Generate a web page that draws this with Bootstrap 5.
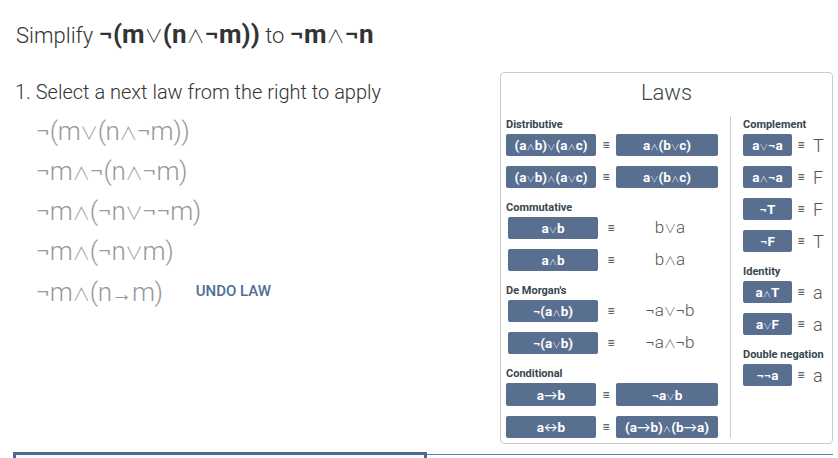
<!DOCTYPE html>
<html lang="en"><head><meta charset="utf-8">
<link href="https://cdn.jsdelivr.net/npm/bootstrap@5.3.0/dist/css/bootstrap.min.css" rel="stylesheet">
<style>
html,body{height:458px;overflow:hidden}
body{font-family:Roboto,"Liberation Sans",sans-serif;color:#37474f;background:#fff}
.page-wrap{padding:0 5px 0 16px;height:458px;position:relative}
.task-title{font-family:Roboto,"Liberation Sans",sans-serif;font-size:22px;font-weight:300;line-height:26px;padding-top:21px;margin:0;color:#333;height:47px}
.task-title b{font-weight:700;font-size:26px;line-height:26px}
.op{font-family:"Noto Sans CJK SC",sans-serif;font-weight:300;font-size:.7em;line-height:0}
.arw{font-family:Lato,sans-serif;font-weight:400;line-height:0}
.arl{font-family:"Liberation Sans",sans-serif;font-weight:400;line-height:0;font-size:.8em}
.body-row{margin-top:25px;gap:0}
.left-side{width:484px}
.step-text{font-size:20px;font-weight:300;line-height:24px;margin:8px 0 0 -1px;color:#333}
.steps{padding-left:20px;margin-top:7px}
.step-line{font-size:26px;font-weight:300;color:#999;line-height:40px;height:40px;white-space:nowrap;letter-spacing:-.4px}
.step-line .op{font-size:.68em}
.undo{font-size:15px;font-weight:500;letter-spacing:0;color:#4f6d97;margin-left:33px;text-transform:uppercase;vertical-align:5px}
.laws{width:333px;height:372px;border:1px solid #ccc;border-radius:4px;padding:0 5px}
.laws-title{font-size:22px;font-weight:300;text-align:center;line-height:26px;margin:7px 0 0;color:#37474f}
.laws-cols{margin-top:10px}
.col-main{width:212px}
.col-side{width:97px;margin-left:12px;border-left:1px solid #ccc;padding-left:12px}
.law-head{font-size:11px;font-weight:700;line-height:14px;height:14px;padding-top:2px;color:#37474f;white-space:nowrap}
.law-row{display:flex;align-items:center;height:22px;margin-top:10px;font-size:15px}
.law-head+.law-row{margin-top:4px}
.btn.law-btn{--bs-btn-padding-y:0;--bs-btn-padding-x:0;background:#596f90;color:#fff;border:0;border-radius:2px;font-size:13.5px;font-weight:700;height:22px;line-height:22px;white-space:nowrap;flex:none}
.law-btn .op{font-size:.62em}
.b-a{width:90px}
.b-b{width:102px}
.b-c{width:49px}
.eq{font-size:12px;text-align:center;width:20px;flex:none}
.ind{padding-left:2px}
.ind .eq{width:26px}
.res{width:92px;text-align:center;font-weight:300;font-size:17px;color:#555}
.side .eq{width:18px}
.side .res{width:auto;margin-left:3px;font-size:18px}
.grp{margin-top:11px}
.tall{height:23px}
.tall .btn.law-btn{height:23px}
.tab-line{position:absolute;left:427px;right:5px;top:454px;border-top:1px solid #5c7fa8}
.tab-active{position:absolute;left:13px;width:414px;top:452px;height:12px;border:3px solid #50688e;background:#f8f9fa}
</style></head>
<body>
<div class="page-wrap">
<h1 class="task-title">Simplify <b>¬(m<span class="op">∨</span>(n<span class="op">∧</span>¬m))</b> to <b>¬m<span class="op">∧</span>¬n</b></h1>
<div class="d-flex body-row">
<div class="left-side">
<p class="step-text">1. Select a next law from the right to apply</p>
<div class="steps">
<div class="step-line">¬(m<span class="op">∨</span>(n<span class="op">∧</span>¬m))</div>
<div class="step-line">¬m<span class="op">∧</span>¬(n<span class="op">∧</span>¬m)</div>
<div class="step-line">¬m<span class="op">∧</span>(¬n<span class="op">∨</span>¬¬m)</div>
<div class="step-line">¬m<span class="op">∧</span>(¬n<span class="op">∨</span>m)</div>
<div class="step-line">¬m<span class="op">∧</span>(n<span class="arl">→</span>m)<a class="undo text-decoration-none" href="#">Undo law</a></div>
</div>
</div>
<div class="laws">
<div class="laws-title">Laws</div>
<div class="d-flex laws-cols">
<div class="col-main">
<div class="law-head">Distributive</div>
<div class="law-row"><button class="btn law-btn b-a">(a<span class="op">∧</span>b)<span class="op">∨</span>(a<span class="op">∧</span>c)</button><span class="eq">≡</span><button class="btn law-btn b-b">a<span class="op">∧</span>(b<span class="op">∨</span>c)</button></div>
<div class="law-row"><button class="btn law-btn b-a">(a<span class="op">∨</span>b)<span class="op">∧</span>(a<span class="op">∨</span>c)</button><span class="eq">≡</span><button class="btn law-btn b-b">a<span class="op">∨</span>(b<span class="op">∧</span>c)</button></div>
<div class="law-head grp">Commutative</div>
<div class="law-row ind"><button class="btn law-btn b-a">a<span class="op">∨</span>b</button><span class="eq">≡</span><span class="res">b<span class="op">∨</span>a</span></div>
<div class="law-row ind"><button class="btn law-btn b-a">a<span class="op">∧</span>b</button><span class="eq">≡</span><span class="res">b<span class="op">∧</span>a</span></div>
<div class="law-head grp">De Morgan's</div>
<div class="law-row ind"><button class="btn law-btn b-a">¬(a<span class="op">∧</span>b)</button><span class="eq">≡</span><span class="res">¬a<span class="op">∨</span>¬b</span></div>
<div class="law-row ind"><button class="btn law-btn b-a">¬(a<span class="op">∨</span>b)</button><span class="eq">≡</span><span class="res">¬a<span class="op">∧</span>¬b</span></div>
<div class="law-head grp">Conditional</div>
<div class="law-row tall"><button class="btn law-btn b-a">a<span class="arw">→</span>b</button><span class="eq">≡</span><button class="btn law-btn b-b">¬a<span class="op">∨</span>b</button></div>
<div class="law-row"><button class="btn law-btn b-a">a<span class="arw">↔</span>b</button><span class="eq">≡</span><button class="btn law-btn b-b">(a<span class="arw">→</span>b)<span class="op">∧</span>(b<span class="arw">→</span>a)</button></div>
</div>
<div class="col-side side">
<div class="law-head">Complement</div>
<div class="law-row"><button class="btn law-btn b-c">a<span class="op">∨</span>¬a</button><span class="eq">≡</span><span class="res">T</span></div>
<div class="law-row"><button class="btn law-btn b-c">a<span class="op">∧</span>¬a</button><span class="eq">≡</span><span class="res">F</span></div>
<div class="law-row"><button class="btn law-btn b-c">¬T</button><span class="eq">≡</span><span class="res">F</span></div>
<div class="law-row"><button class="btn law-btn b-c">¬F</button><span class="eq">≡</span><span class="res">T</span></div>
<div class="law-head grp">Identity</div>
<div class="law-row"><button class="btn law-btn b-c">a<span class="op">∧</span>T</button><span class="eq">≡</span><span class="res">a</span></div>
<div class="law-row"><button class="btn law-btn b-c">a<span class="op">∨</span>F</button><span class="eq">≡</span><span class="res">a</span></div>
<div class="law-head grp">Double negation</div>
<div class="law-row"><button class="btn law-btn b-c">¬¬a</button><span class="eq">≡</span><span class="res">a</span></div>
</div>
</div>
</div>
</div>
<div class="tab-line"></div>
<div class="tab-active"></div>
</div>
<script src="https://cdn.jsdelivr.net/npm/bootstrap@5.3.0/dist/js/bootstrap.bundle.min.js"></script>
</body></html>
